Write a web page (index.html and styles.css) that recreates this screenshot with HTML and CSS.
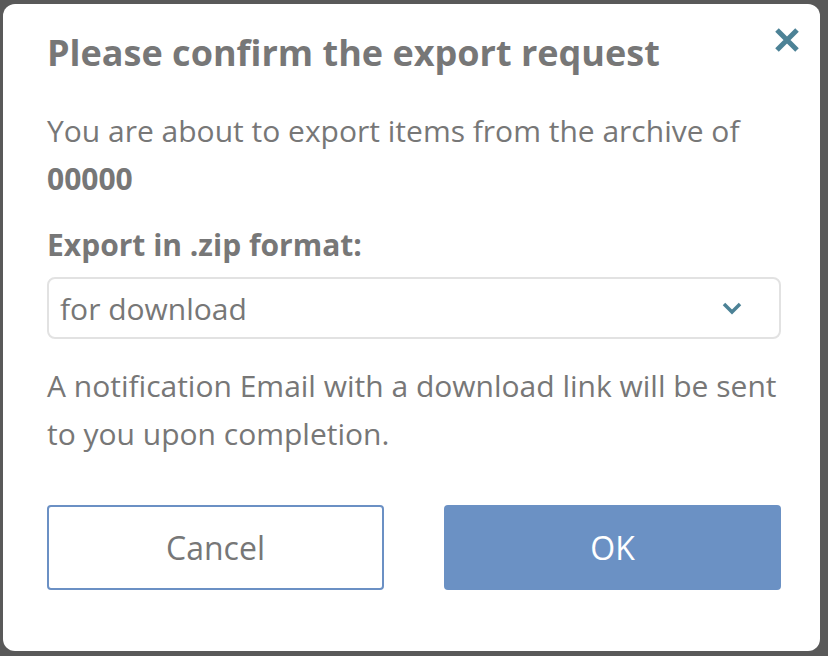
FILE: index.html
```html
<!DOCTYPE html>
<html lang="en">
<head>
  <meta charset="UTF-8" />
  <title>Export request</title>
  <link rel="stylesheet" href="styles.css">
</head>
<body>
  <div class="dialog">
    <div class="dialog-head">
      <h2>Please confirm the export request</h2>
      <button class="close" type="button" aria-label="Close">
        <svg width="28" height="28" viewBox="0 0 28 28">
          <path d="M4 4 L24 24 M24 4 L4 24" stroke="#4c8296" stroke-width="5" fill="none"/>
        </svg>
      </button>
    </div>
    <p class="intro">You are about to export items from the archive of <b>00000</b></p>
    <label class="field-label" for="target">Export in .zip format:</label>
    <div class="select">
      <span>for download</span>
      <svg width="22" height="14" viewBox="0 0 22 14">
        <path d="M3 3 L11 11 L19 3" stroke="#4c8296" stroke-width="3.5" fill="none"/>
      </svg>
    </div>
    <p class="note">A notification Email with a download link will be sent to you upon completion.</p>
    <div class="actions">
      <button class="btn btn-cancel" type="button">Cancel</button>
      <button class="btn btn-ok" type="button">OK</button>
    </div>
  </div>
</body>
</html>
```

FILE: styles.css
```css
html, body {
  height: 100%;
}
body {
  margin: 0;
  padding: 4px 8px 5px 3px;
  box-sizing: border-box;
  background-color: #595959;
  font-family: "Open Sans", sans-serif;
  color: #777;
}
.dialog {
  height: 100%;
  box-sizing: border-box;
  background: #fff;
  border-radius: 12px;
  padding: 27px 39px 0 44px;
}
.dialog-head {
  display: flex;
  justify-content: space-between;
  align-items: flex-start;
}
h2 {
  margin: 0;
  font-size: 36px;
  line-height: 44px;
  font-weight: 700;
  color: #777;
}
.close {
  border: none;
  background: none;
  padding: 0;
  margin: -5px -20px 0 0;
  cursor: pointer;
}
.intro, .note {
  margin: 0;
  font-size: 30px;
  line-height: 48px;
}
.intro {
  margin-top: 32px;
}
.intro b {
  display: block;
}
.field-label {
  display: block;
  margin-top: 22px;
  font-size: 30px;
  line-height: 40px;
  font-weight: 700;
}
.select {
  margin-top: 12px;
  height: 62px;
  box-sizing: border-box;
  border: 2px solid #e2e2e2;
  border-radius: 8px;
  display: flex;
  align-items: center;
  justify-content: space-between;
  padding: 0 36px 0 11px;
  font-size: 30px;
}
.note {
  margin-top: 23px;
}
.actions {
  margin-top: 47px;
  display: flex;
  justify-content: space-between;
}
.btn {
  width: 337px;
  height: 85px;
  border-radius: 4px;
  font-family: "Open Sans", sans-serif;
  font-size: 32px;
  cursor: pointer;
}
.btn-cancel {
  background: #fff;
  border: 2px solid #6b90c4;
  color: #777;
}
.btn-ok {
  background: #6b91c4;
  border: none;
  color: #fff;
}
```
